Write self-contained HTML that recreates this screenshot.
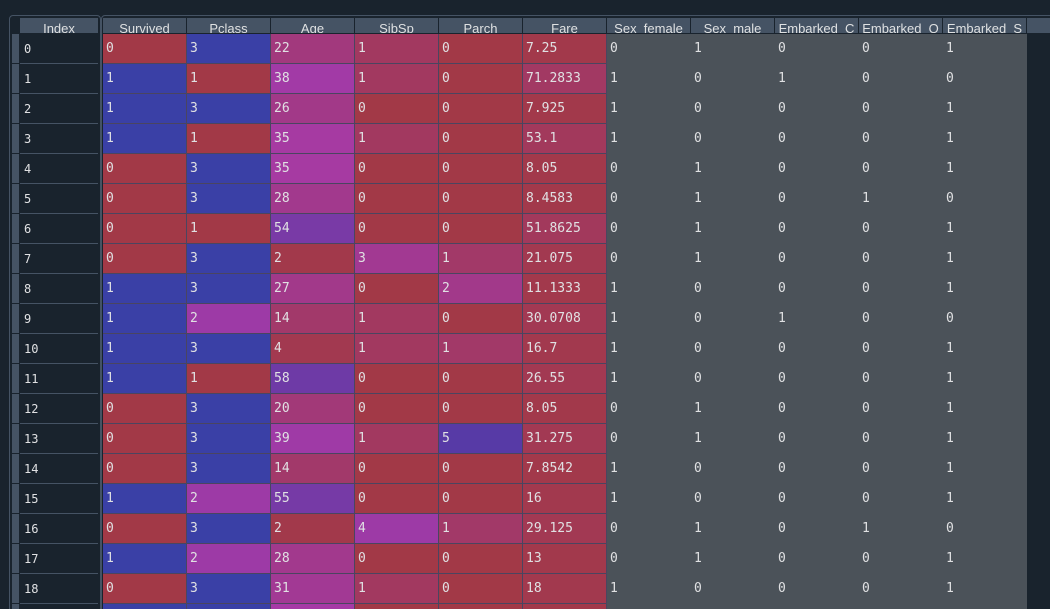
<!DOCTYPE html>
<html><head><meta charset="utf-8"><style>
html,body{margin:0;width:1050px;height:609px;overflow:hidden}
body{background:#19232d;font-family:"DejaVu Sans Mono","Liberation Mono",monospace;color:#e0e1e3}
#w{position:relative;width:1050px;height:609px;overflow:hidden}
.fr{position:absolute;border:1px solid #455364;border-radius:4px}
.hd{position:absolute;top:18px;height:15px;background:#455364;overflow:hidden}
.hc{position:absolute;top:0;height:15px;border-right:1px solid #19232d;box-sizing:border-box;text-align:center;font-family:"Liberation Sans",sans-serif;font-size:13px;line-height:22px;color:#dfe1e2;white-space:nowrap;overflow:hidden}
.ix{position:absolute;left:20px;width:74px;height:29px;border-bottom:1px solid #455364;font-size:12px;line-height:30px;padding-left:4px}
.ib{position:absolute;left:12px;width:7px;height:29px;background:#455364}
.row{position:absolute;left:103px;height:30px;display:flex}
.row div{width:83px;height:29px;margin-right:1px;margin-bottom:1px;font-size:13px;line-height:30px;padding-left:3px;box-sizing:border-box}
.g{background:#4b5259}
.grid{position:absolute;left:103px;top:34px;width:924px;height:575px;background:#4a4560}
.gg{position:absolute;left:607px;top:34px;width:420px;height:575px;background:#4b5259}
</style></head><body><div id="w">
<div class="fr" style="left:9px;top:15px;width:90px;height:600px"></div>
<div class="fr" style="left:101px;top:15px;width:960px;height:600px"></div>
<div class="hd" style="left:20px;width:78px"><div class="hc" style="left:0;width:78px;border:none">Index</div></div>
<div class="hd" style="left:103px;width:947px">
<div class="hc" style="left:0;width:84px">Survived</div>
<div class="hc" style="left:84px;width:84px">Pclass</div>
<div class="hc" style="left:168px;width:84px">Age</div>
<div class="hc" style="left:252px;width:84px">SibSp</div>
<div class="hc" style="left:336px;width:84px">Parch</div>
<div class="hc" style="left:420px;width:84px">Fare</div>
<div class="hc" style="left:504px;width:84px">Sex_female</div>
<div class="hc" style="left:588px;width:84px">Sex_male</div>
<div class="hc" style="left:672px;width:84px">Embarked_C</div>
<div class="hc" style="left:756px;width:84px">Embarked_Q</div>
<div class="hc" style="left:840px;width:84px">Embarked_S</div>
</div>
<div class="grid"></div><div class="gg"></div>

<div class="ib" style="top:34px"></div><div class="ix" style="top:34px">0</div>
<div class="ib" style="top:64px"></div><div class="ix" style="top:64px">1</div>
<div class="ib" style="top:94px"></div><div class="ix" style="top:94px">2</div>
<div class="ib" style="top:124px"></div><div class="ix" style="top:124px">3</div>
<div class="ib" style="top:154px"></div><div class="ix" style="top:154px">4</div>
<div class="ib" style="top:184px"></div><div class="ix" style="top:184px">5</div>
<div class="ib" style="top:214px"></div><div class="ix" style="top:214px">6</div>
<div class="ib" style="top:244px"></div><div class="ix" style="top:244px">7</div>
<div class="ib" style="top:274px"></div><div class="ix" style="top:274px">8</div>
<div class="ib" style="top:304px"></div><div class="ix" style="top:304px">9</div>
<div class="ib" style="top:334px"></div><div class="ix" style="top:334px">10</div>
<div class="ib" style="top:364px"></div><div class="ix" style="top:364px">11</div>
<div class="ib" style="top:394px"></div><div class="ix" style="top:394px">12</div>
<div class="ib" style="top:424px"></div><div class="ix" style="top:424px">13</div>
<div class="ib" style="top:454px"></div><div class="ix" style="top:454px">14</div>
<div class="ib" style="top:484px"></div><div class="ix" style="top:484px">15</div>
<div class="ib" style="top:514px"></div><div class="ix" style="top:514px">16</div>
<div class="ib" style="top:544px"></div><div class="ix" style="top:544px">17</div>
<div class="ib" style="top:574px"></div><div class="ix" style="top:574px">18</div>
<div class="ib" style="top:604px"></div>

<div class="row" style="top:34px"><div style="background:hsl(352,48%,43%)">0</div><div style="background:hsl(237,48%,44%)">3</div><div style="background:hsl(321,48%,43%)">22</div><div style="background:hsl(338,48%,43%)">1</div><div style="background:hsl(352,48%,43%)">0</div><div style="background:hsl(350,48%,43%)">7.25</div><div class="g">0</div><div class="g">1</div><div class="g">0</div><div class="g">0</div><div class="g">1</div></div>
<div class="row" style="top:64px"><div style="background:hsl(237,48%,44%)">1</div><div style="background:hsl(352,48%,43%)">1</div><div style="background:hsl(298,48%,44%)">38</div><div style="background:hsl(338,48%,43%)">1</div><div style="background:hsl(352,48%,43%)">0</div><div style="background:hsl(336,48%,43%)">71.2833</div><div class="g">1</div><div class="g">0</div><div class="g">1</div><div class="g">0</div><div class="g">0</div></div>
<div class="row" style="top:94px"><div style="background:hsl(237,48%,44%)">1</div><div style="background:hsl(237,48%,44%)">3</div><div style="background:hsl(315,48%,43%)">26</div><div style="background:hsl(352,48%,43%)">0</div><div style="background:hsl(352,48%,43%)">0</div><div style="background:hsl(350,48%,43%)">7.925</div><div class="g">1</div><div class="g">0</div><div class="g">0</div><div class="g">0</div><div class="g">1</div></div>
<div class="row" style="top:124px"><div style="background:hsl(237,48%,44%)">1</div><div style="background:hsl(352,48%,43%)">1</div><div style="background:hsl(302,48%,44%)">35</div><div style="background:hsl(338,48%,43%)">1</div><div style="background:hsl(352,48%,43%)">0</div><div style="background:hsl(340,48%,43%)">53.1</div><div class="g">1</div><div class="g">0</div><div class="g">0</div><div class="g">0</div><div class="g">1</div></div>
<div class="row" style="top:154px"><div style="background:hsl(352,48%,43%)">0</div><div style="background:hsl(237,48%,44%)">3</div><div style="background:hsl(302,48%,44%)">35</div><div style="background:hsl(352,48%,43%)">0</div><div style="background:hsl(352,48%,43%)">0</div><div style="background:hsl(350,48%,43%)">8.05</div><div class="g">0</div><div class="g">1</div><div class="g">0</div><div class="g">0</div><div class="g">1</div></div>
<div class="row" style="top:184px"><div style="background:hsl(352,48%,43%)">0</div><div style="background:hsl(237,48%,44%)">3</div><div style="background:hsl(312,48%,43%)">28</div><div style="background:hsl(352,48%,43%)">0</div><div style="background:hsl(352,48%,43%)">0</div><div style="background:hsl(350,48%,43%)">8.4583</div><div class="g">0</div><div class="g">1</div><div class="g">0</div><div class="g">1</div><div class="g">0</div></div>
<div class="row" style="top:214px"><div style="background:hsl(352,48%,43%)">0</div><div style="background:hsl(352,48%,43%)">1</div><div style="background:hsl(275,48%,44%)">54</div><div style="background:hsl(352,48%,43%)">0</div><div style="background:hsl(352,48%,43%)">0</div><div style="background:hsl(340,48%,43%)">51.8625</div><div class="g">0</div><div class="g">1</div><div class="g">0</div><div class="g">0</div><div class="g">1</div></div>
<div class="row" style="top:244px"><div style="background:hsl(352,48%,43%)">0</div><div style="background:hsl(237,48%,44%)">3</div><div style="background:hsl(350,48%,43%)">2</div><div style="background:hsl(309,48%,43%)">3</div><div style="background:hsl(333,48%,43%)">1</div><div style="background:hsl(347,48%,43%)">21.075</div><div class="g">0</div><div class="g">1</div><div class="g">0</div><div class="g">0</div><div class="g">1</div></div>
<div class="row" style="top:274px"><div style="background:hsl(237,48%,44%)">1</div><div style="background:hsl(237,48%,44%)">3</div><div style="background:hsl(314,48%,43%)">27</div><div style="background:hsl(352,48%,43%)">0</div><div style="background:hsl(314,48%,43%)">2</div><div style="background:hsl(349,48%,43%)">11.1333</div><div class="g">1</div><div class="g">0</div><div class="g">0</div><div class="g">0</div><div class="g">1</div></div>
<div class="row" style="top:304px"><div style="background:hsl(237,48%,44%)">1</div><div style="background:hsl(295,48%,44%)">2</div><div style="background:hsl(332,48%,43%)">14</div><div style="background:hsl(338,48%,43%)">1</div><div style="background:hsl(352,48%,43%)">0</div><div style="background:hsl(345,48%,43%)">30.0708</div><div class="g">1</div><div class="g">0</div><div class="g">1</div><div class="g">0</div><div class="g">0</div></div>
<div class="row" style="top:334px"><div style="background:hsl(237,48%,44%)">1</div><div style="background:hsl(237,48%,44%)">3</div><div style="background:hsl(347,48%,43%)">4</div><div style="background:hsl(338,48%,43%)">1</div><div style="background:hsl(333,48%,43%)">1</div><div style="background:hsl(348,48%,43%)">16.7</div><div class="g">1</div><div class="g">0</div><div class="g">0</div><div class="g">0</div><div class="g">1</div></div>
<div class="row" style="top:364px"><div style="background:hsl(237,48%,44%)">1</div><div style="background:hsl(352,48%,43%)">1</div><div style="background:hsl(269,48%,44%)">58</div><div style="background:hsl(352,48%,43%)">0</div><div style="background:hsl(352,48%,43%)">0</div><div style="background:hsl(346,48%,43%)">26.55</div><div class="g">1</div><div class="g">0</div><div class="g">0</div><div class="g">0</div><div class="g">1</div></div>
<div class="row" style="top:394px"><div style="background:hsl(352,48%,43%)">0</div><div style="background:hsl(237,48%,44%)">3</div><div style="background:hsl(324,48%,43%)">20</div><div style="background:hsl(352,48%,43%)">0</div><div style="background:hsl(352,48%,43%)">0</div><div style="background:hsl(350,48%,43%)">8.05</div><div class="g">0</div><div class="g">1</div><div class="g">0</div><div class="g">0</div><div class="g">1</div></div>
<div class="row" style="top:424px"><div style="background:hsl(352,48%,43%)">0</div><div style="background:hsl(237,48%,44%)">3</div><div style="background:hsl(296,48%,44%)">39</div><div style="background:hsl(338,48%,43%)">1</div><div style="background:hsl(256,48%,44%)">5</div><div style="background:hsl(345,48%,43%)">31.275</div><div class="g">0</div><div class="g">1</div><div class="g">0</div><div class="g">0</div><div class="g">1</div></div>
<div class="row" style="top:454px"><div style="background:hsl(352,48%,43%)">0</div><div style="background:hsl(237,48%,44%)">3</div><div style="background:hsl(332,48%,43%)">14</div><div style="background:hsl(352,48%,43%)">0</div><div style="background:hsl(352,48%,43%)">0</div><div style="background:hsl(350,48%,43%)">7.8542</div><div class="g">1</div><div class="g">0</div><div class="g">0</div><div class="g">0</div><div class="g">1</div></div>
<div class="row" style="top:484px"><div style="background:hsl(237,48%,44%)">1</div><div style="background:hsl(295,48%,44%)">2</div><div style="background:hsl(273,48%,44%)">55</div><div style="background:hsl(352,48%,43%)">0</div><div style="background:hsl(352,48%,43%)">0</div><div style="background:hsl(348,48%,43%)">16</div><div class="g">1</div><div class="g">0</div><div class="g">0</div><div class="g">0</div><div class="g">1</div></div>
<div class="row" style="top:514px"><div style="background:hsl(352,48%,43%)">0</div><div style="background:hsl(237,48%,44%)">3</div><div style="background:hsl(350,48%,43%)">2</div><div style="background:hsl(295,48%,44%)">4</div><div style="background:hsl(333,48%,43%)">1</div><div style="background:hsl(345,48%,43%)">29.125</div><div class="g">0</div><div class="g">1</div><div class="g">0</div><div class="g">1</div><div class="g">0</div></div>
<div class="row" style="top:544px"><div style="background:hsl(237,48%,44%)">1</div><div style="background:hsl(295,48%,44%)">2</div><div style="background:hsl(312,48%,43%)">28</div><div style="background:hsl(352,48%,43%)">0</div><div style="background:hsl(352,48%,43%)">0</div><div style="background:hsl(349,48%,43%)">13</div><div class="g">0</div><div class="g">1</div><div class="g">0</div><div class="g">0</div><div class="g">1</div></div>
<div class="row" style="top:574px"><div style="background:hsl(352,48%,43%)">0</div><div style="background:hsl(237,48%,44%)">3</div><div style="background:hsl(308,48%,43%)">31</div><div style="background:hsl(338,48%,43%)">1</div><div style="background:hsl(352,48%,43%)">0</div><div style="background:hsl(348,48%,43%)">18</div><div class="g">1</div><div class="g">0</div><div class="g">0</div><div class="g">0</div><div class="g">1</div></div>
<div class="row" style="top:604px"><div style="background:hsl(237,48%,44%)"></div><div style="background:hsl(237,48%,44%)"></div><div style="background:hsl(300,48%,44%)"></div><div style="background:hsl(352,48%,43%)"></div><div style="background:hsl(352,48%,43%)"></div><div style="background:hsl(350,48%,43%)"></div><div class="g"></div><div class="g"></div><div class="g"></div><div class="g"></div><div class="g"></div></div>
</div></body></html>
